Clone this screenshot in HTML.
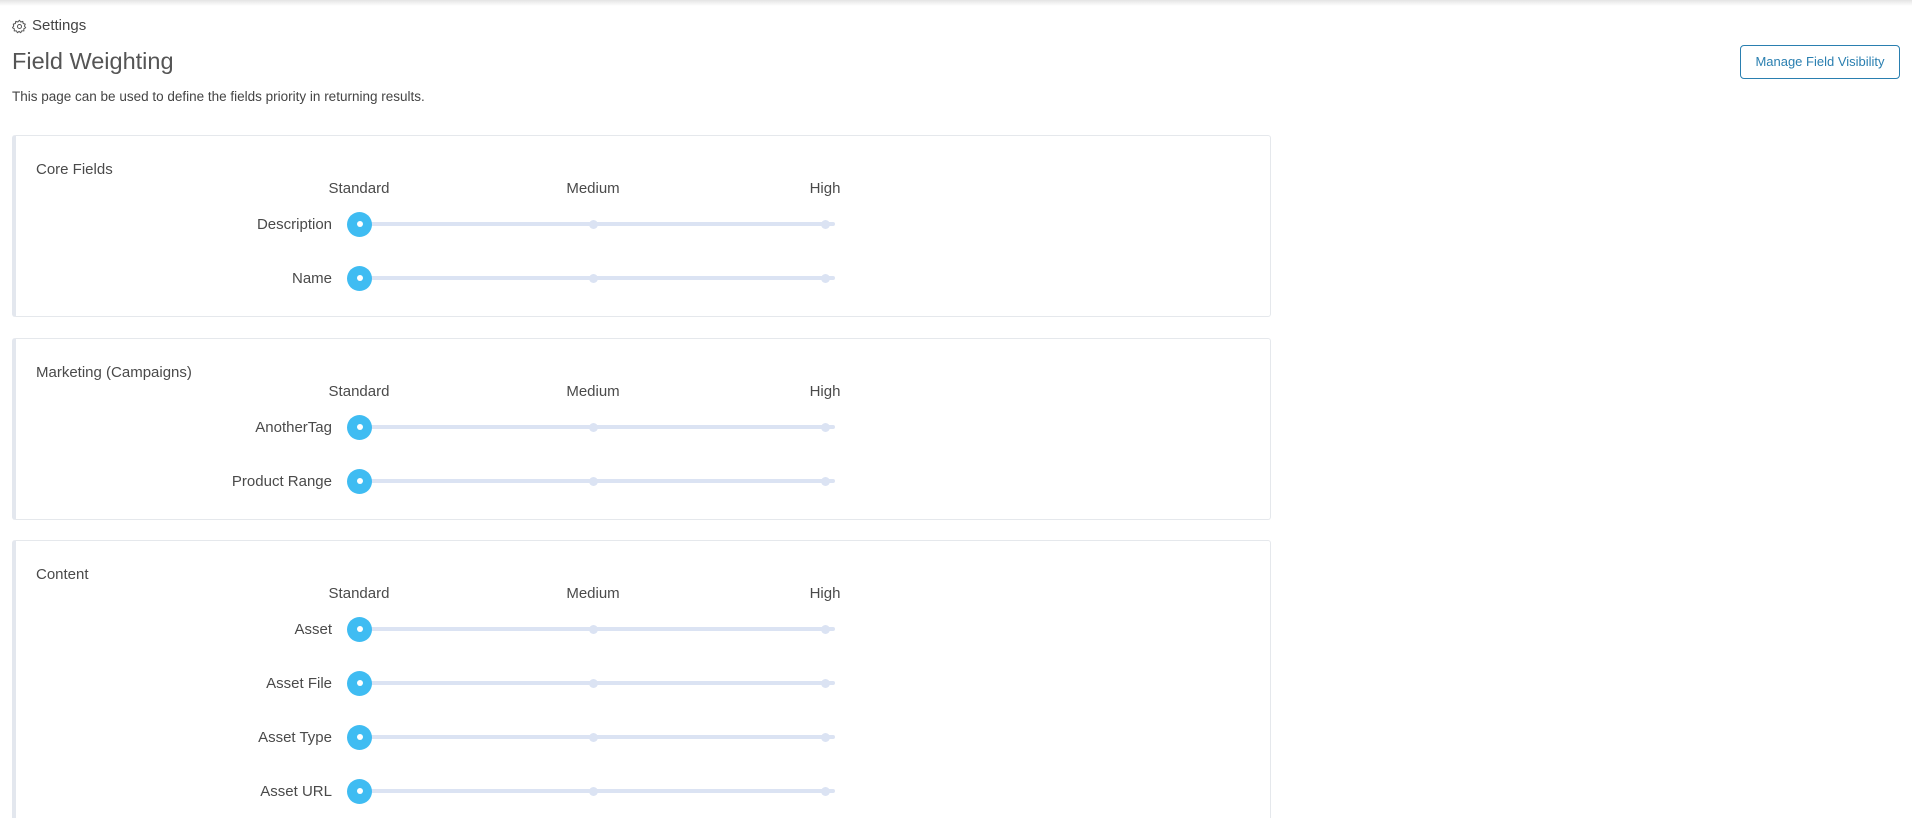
<!DOCTYPE html>
<html><head><meta charset="utf-8"><style>
*{margin:0;padding:0;box-sizing:border-box}
html{width:1912px;height:818px;overflow:hidden}
body{width:1912px;height:818px;overflow:hidden;background:#fff;font-family:"Liberation Sans",sans-serif;color:#4a4a4a;position:relative}
.shadow{position:absolute;left:0;top:0;width:1912px;height:6px;background:linear-gradient(#e4e4e4,#fff)}
.a{position:absolute;white-space:nowrap}
.panel{position:absolute;left:12px;width:1259px;border:1px solid #e5e8ec;border-left:4px solid #e3e7ee;border-radius:3px;background:#fff}
.hdr{position:absolute;font-size:15px;transform:translateX(-50%)}
.track{position:absolute;height:4px;background:#dbe3f3;border-radius:2px}
.dot{position:absolute;width:9px;height:9px;border-radius:50%;background:#dbe3f3}
.knob{position:absolute;width:25px;height:25px;border-radius:50%;background:#3fbcf2}
.knob:after{content:"";position:absolute;left:9.5px;top:9.5px;width:6px;height:6px;border-radius:50%;background:#fff}
.btn{position:absolute;left:1740px;top:45px;width:160px;height:34px;border:1.5px solid #2a7fb0;border-radius:4px;color:#2a7fb0;font-size:13px;text-align:center;line-height:31px}
</style></head><body>
<div class="shadow"></div>
<svg class="a" style="left:12px;top:19px" width="15" height="15" viewBox="0 0 24 24" fill="none" stroke="#555" stroke-width="1.6"><circle cx="12" cy="12" r="3.2"/><path d="M12 2l2 2.8 3.3-1 .6 3.4 3.3 1-1.3 3.1 2 2.7-3 1.7.1 3.4-3.4-.2-1.6 3-2.7-2-2.7 2-1.6-3-3.4.2.1-3.4-3-1.7 2-2.7L2.1 8.2l3.3-1 .6-3.4 3.3 1z" stroke-linejoin="round"/></svg>
<div class="a" style="left:32px;top:17px;font-size:15px;color:#444">Settings</div>
<div class="a" style="left:12px;top:48px;font-size:23.5px;color:#555;font-weight:300">Field Weighting</div>
<div class="a" style="left:12px;top:89px;font-size:13.5px;color:#444">This page can be used to define the fields priority in returning results.</div>
<div class="btn">Manage Field Visibility</div>

<div id="p"></div>
<script>
const panels=[{top:135,h:182,t:"Core Fields",rows:["Description","Name"]},
{top:338,h:182,t:"Marketing (Campaigns)",rows:["AnotherTag","Product Range"]},
{top:540,h:300,t:"Content",rows:["Asset","Asset File","Asset Type","Asset URL"]}];
let html="";
for(const p of panels){
 const ty=p.top+26, hy=p.top+45;
 html+=`<div class="panel" style="top:${p.top}px;height:${p.h}px"></div>`;
 html+=`<div class="a" style="left:36px;top:${ty}px;font-size:15px">${p.t}</div>`;
 [["Standard",359],["Medium",593],["High",825]].forEach(([t,x])=>html+=`<div class="a hdr" style="left:${x}px;top:${hy}px">${t}</div>`);
 p.rows.forEach((r,i)=>{const cy=p.top+89+i*54;
  html+=`<div class="a" style="right:${1912-332}px;top:${cy-8}px;font-size:15px">${r}</div>`;
  html+=`<div class="track" style="left:359px;width:476px;top:${cy-2}px"></div>`;
  html+=`<div class="dot" style="left:589px;top:${cy-4.5}px"></div><div class="dot" style="left:821px;top:${cy-4.5}px"></div>`;
  html+=`<div class="knob" style="left:347px;top:${cy-12.5}px"></div>`;
 });
}
document.getElementById("p").outerHTML=html;
</script>
</body></html>
